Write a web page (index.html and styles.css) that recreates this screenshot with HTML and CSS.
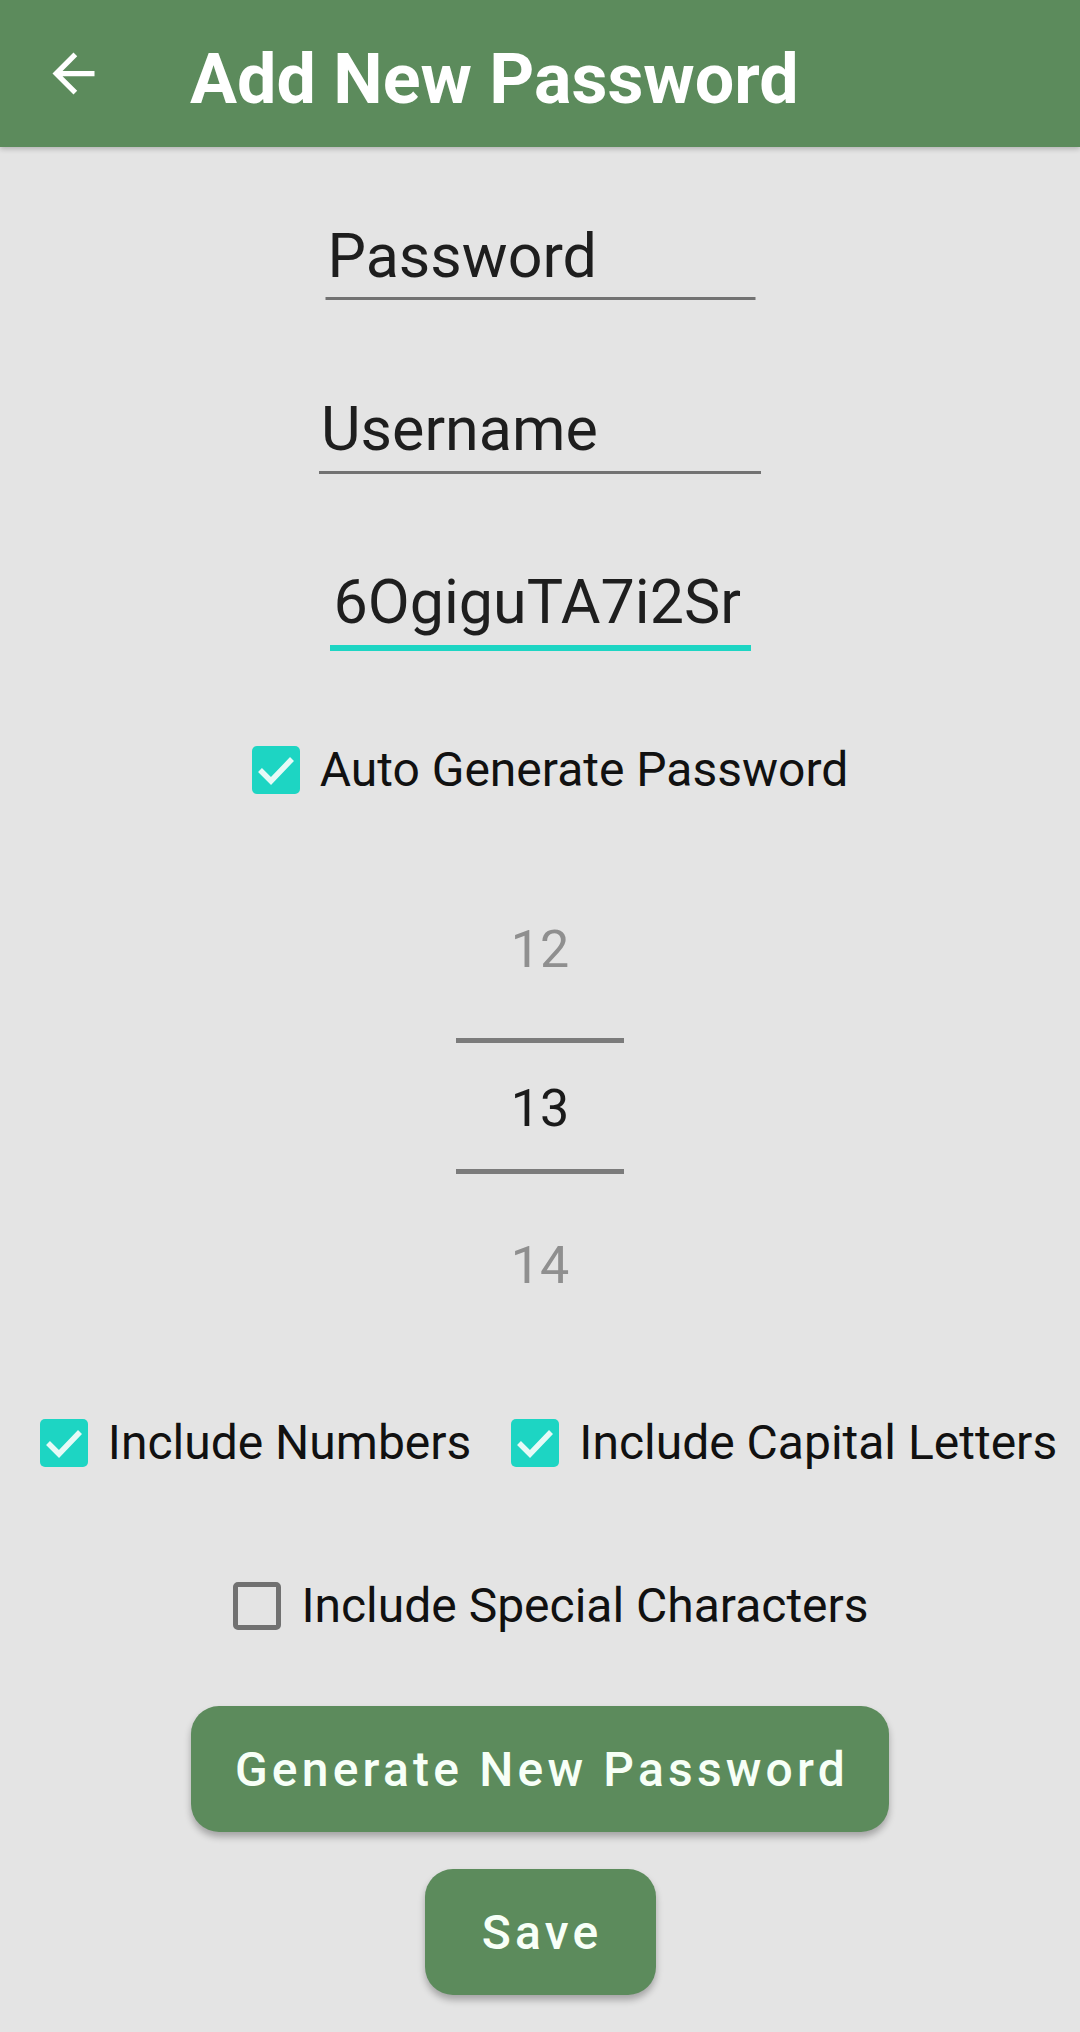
FILE: index.html
```html
<!DOCTYPE html>
<html>
<head>
<meta charset="utf-8">
<link rel="stylesheet" href="styles.css">
</head>
<body>
<header class="appbar">
  <svg class="back" viewBox="0 0 24 24" width="63" height="63"><path fill="#ffffff" d="M20 11H7.83l5.59-5.59L12 4l-8 8 8 8 1.41-1.41L7.83 13H20v-2z"/></svg>
  <h1 class="title">Add New Password</h1>
</header>
<main class="form">
  <div class="field field-password"><span class="hint">Password</span></div>
  <div class="field field-username"><span class="hint">Username</span></div>
  <div class="field field-generated focused"><span class="value">6OgiguTA7i2Sr</span></div>

  <div class="row row-auto">
    <label class="check"><span class="box checked"><svg viewBox="0 0 48 48" width="48" height="48"><path d="M8 24 L19 35 L40 13" fill="none" stroke="#e6faf7" stroke-width="5.5"/></svg></span><span class="label">Auto Generate Password</span></label>
  </div>

  <div class="picker">
    <div class="pick pick-prev">12</div>
    <div class="pick pick-current">13</div>
    <div class="pick pick-next">14</div>
  </div>

  <div class="row row-pair">
    <label class="check"><span class="box checked"><svg viewBox="0 0 48 48" width="48" height="48"><path d="M8 24 L19 35 L40 13" fill="none" stroke="#e6faf7" stroke-width="5.5"/></svg></span><span class="label">Include Numbers</span></label>
    <label class="check"><span class="box checked"><svg viewBox="0 0 48 48" width="48" height="48"><path d="M8 24 L19 35 L40 13" fill="none" stroke="#e6faf7" stroke-width="5.5"/></svg></span><span class="label">Include Capital Letters</span></label>
  </div>

  <div class="row row-special">
    <label class="check"><span class="box unchecked"></span><span class="label">Include Special Characters</span></label>
  </div>

  <button class="btn btn-generate">Generate New Password</button>
  <button class="btn btn-save">Save</button>
</main>
</body>
</html>
```

FILE: styles.css
```css
* { box-sizing: border-box; }
html, body {
  margin: 0;
  padding: 0;
  background: #e4e4e4;
  font-family: Roboto, "Liberation Sans", sans-serif;
  width: 1080px;
  height: 2032px;
  overflow: hidden;
}
.appbar {
  height: 147px;
  background: #5c8b5c;
  display: flex;
  align-items: center;
  padding-left: 42px;
  box-shadow: 0 2px 5px rgba(0,0,0,0.22);
  position: relative;
  z-index: 1;
}
.back { display: block; flex: none; }
.title {
  margin: 0 0 0 85px;
  padding-top: 10px;
  color: #ffffff;
  font-size: 70px;
  font-weight: 700;
  line-height: 80px;
  letter-spacing: 0;
}
.form {
  display: flex;
  flex-direction: column;
  align-items: center;
}
.field {
  font-size: 61px;
  line-height: 74px;
  color: #1e1e1e;
  border-bottom: 3px solid #727272;
  padding-bottom: 4px;
  padding-left: 2px;
  white-space: nowrap;
}
.field-password { margin-top: 72px; width: 430px; transform: translateX(0.5px); }
.field-username { margin-top: 92px; width: 442px; padding-bottom: 5px; }
.field-generated { margin-top: 91px; width: 421px; padding-left: 4px; padding-bottom: 6px; }
.field.focused { border-bottom: 6px solid #1dd5c3; }

.row {
  display: flex;
  justify-content: center;
  height: 56px;
  align-items: center;
}
.row-auto { margin-top: 91px; padding-left: 20px; }
.row-pair { margin-top: 57px; gap: 40px; padding-left: 17px; }
.row-special { margin-top: 107px; padding-left: 22px; }

.check {
  display: flex;
  align-items: center;
  gap: 20px;
  font-size: 48px;
  line-height: 56px;
  color: #111111;
  white-space: nowrap;
}
.box {
  width: 48px;
  height: 48px;
  border-radius: 5px;
  flex: none;
  display: block;
}
.box svg { display: block; }
.box.checked { background: #1dd5c3; }
.box.unchecked { border: 5px solid #717171; border-radius: 5px; }

.picker {
  margin-top: 64px;
  width: 168px;
  display: flex;
  flex-direction: column;
}
.pick {
  display: flex;
  align-items: center;
  justify-content: center;
  font-size: 52px;
  line-height: 62px;
  color: #8f8f8f;
}
.pick-prev { height: 176px; }
.pick-current {
  height: 136px;
  padding-top: 6px;
  border-top: 5px solid #7b7b7b;
  border-bottom: 5px solid #7b7b7b;
  color: #1a1a1a;
}
.pick-next { height: 184px; }

.btn {
  border: none;
  background: #5c8b5c;
  color: #f7fff7;
  font-family: Roboto, "Liberation Sans", sans-serif;
  font-size: 48px;
  font-weight: 500;
  letter-spacing: 4.2px;
  height: 126px;
  border-radius: 28px;
  box-shadow: 0 5px 7px rgba(0,0,0,0.28);
  padding: 0 0 0 4px;
  display: flex;
  align-items: center;
  justify-content: center;
}
.btn-generate { margin-top: 72px; width: 698px; }
.btn-save { margin-top: 37px; width: 231px; }
```
